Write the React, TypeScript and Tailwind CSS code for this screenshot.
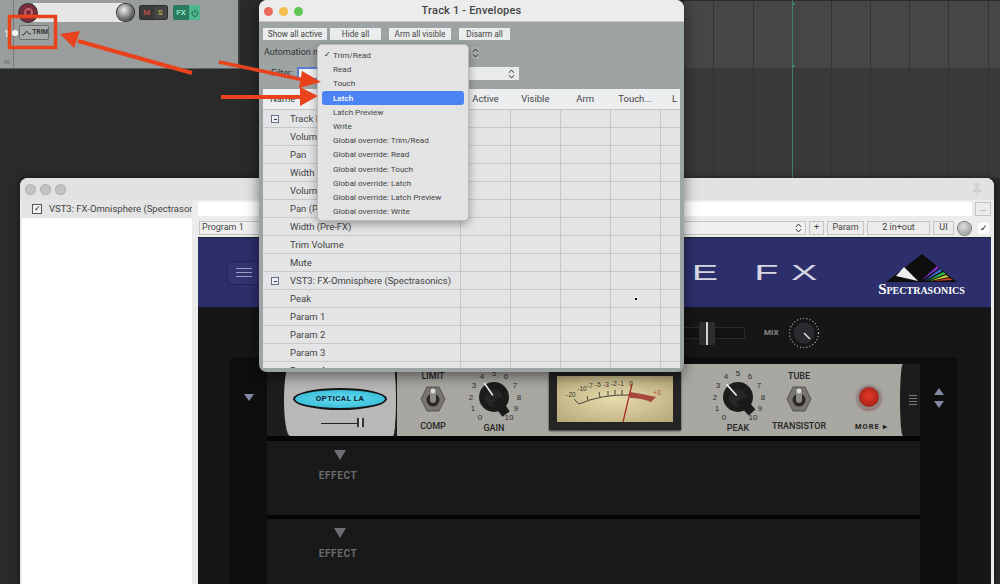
import { Power } from 'lucide-react'

const MENU_ITEMS = [
  'Trim/Read',
  'Read',
  'Touch',
  'Latch',
  'Latch Preview',
  'Write',
  'Global override: Trim/Read',
  'Global override: Read',
  'Global override: Touch',
  'Global override: Latch',
  'Global override: Latch Preview',
  'Global override: Write',
]

const ROWS = [
  { name: 'Track Envelopes', box: true },
  { name: 'Volume' },
  { name: 'Pan' },
  { name: 'Width' },
  { name: 'Volume (Pre-FX)' },
  { name: 'Pan (Pre-FX)' },
  { name: 'Width (Pre-FX)' },
  { name: 'Trim Volume' },
  { name: 'Mute' },
  { name: 'VST3: FX-Omnisphere (Spectrasonics)', box: true },
  { name: 'Peak', dot: true },
  { name: 'Param 1' },
  { name: 'Param 2' },
  { name: 'Param 3' },
  { name: 'Param 4' },
]

function Chevrons({ className = '' }: { className?: string }) {
  return (
    <svg width="7" height="10" viewBox="0 0 7 10" className={className}>
      <path d="M1 3.8 3.5 1 6 3.8M1 6.2 3.5 9 6 6.2" fill="none" stroke="#333" strokeWidth="1" />
    </svg>
  )
}

function TopButton({ label, width }: { label: string; width: number }) {
  return (
    <div
      className="flex h-[12px] items-center justify-center whitespace-nowrap bg-[#ebecec] text-[8.2px] text-[#444]"
      style={{ width }}
    >
      {label}
    </div>
  )
}

function TrackPanel() {
  return (
    <div className="absolute left-0 top-0 flex h-[69px] w-[240px] border-b border-[#5c5f5f] bg-[#999d9d]">
      <div className="flex h-full w-[14px] flex-col items-start border-r border-[#777b7b] pl-[4px] text-[9px] text-white">
        <span className="mt-[28px]">1</span>
        <div className="mt-auto mb-[4px] h-[4px] w-[6px] rounded-[1px] bg-[#858989]" />
      </div>
      <div className="relative flex-1 border-r-2 border-[#3a3a3a]">
        <div className="flex items-center pt-[3px]">
          <div className="relative z-10 -mr-[4px] ml-[5px] flex h-[18px] w-[18px] items-center justify-center rounded-full bg-[#7b2e3a] ring-1 ring-[#333]">
            <div className="h-[9px] w-[9px] rounded-full border-2 border-[#c2646c]" />
          </div>
          <div className="h-[19px] w-[90px] bg-[#e6e7e5]" />
          <div className="-ml-[6px] h-[17px] w-[17px] rounded-full bg-[radial-gradient(circle_at_40%_35%,#eee,#777_55%,#222)] ring-1 ring-[#222]" />
          <div className="ml-[5px] flex h-[15px] w-[29px] overflow-hidden rounded-[2px] border border-[#2d2d2d] text-[8px] font-bold">
            <div className="flex flex-1 items-center justify-center bg-[#3a3a3a] text-[#b2504a]">M</div>
            <div className="flex flex-1 items-center justify-center bg-[#444] text-[#b5a04a]">S</div>
          </div>
          <div className="ml-[5px] flex h-[15px] w-[27px] overflow-hidden rounded-[2px] text-[8px] font-bold">
            <div className="flex flex-1 items-center justify-center bg-[#2c7a5f] text-[#8fe0bb]">FX</div>
            <div className="flex w-[11px] items-center justify-center bg-[#4fb78e] text-[#1f5a45]">
              <Power size={8} strokeWidth={2.5} />
            </div>
          </div>
        </div>
        <div className="absolute -left-[2px] top-[30px] h-[6px] w-[6px] rounded-full bg-white" />
        <div className="absolute left-[5px] top-[25px] flex h-[15px] w-[30px] items-center gap-[1px] rounded-[2px] border border-[#6d7070] bg-[#a9acac] pl-[2px] text-[6.5px] font-bold text-[#333]">
          <svg width="10" height="6" viewBox="0 0 10 6">
            <path d="M0 5H2L5 1 8 4H10" fill="none" stroke="#222" strokeWidth="1" />
          </svg>
          TRIM
        </div>
      </div>
    </div>
  )
}

function ArrangeView() {
  const cells = [30, 40, 39, 39, 39, 39, 39, 40, 39]
  return (
    <div className="absolute left-[684px] top-0 h-[178px] w-[316px] overflow-hidden bg-[#393939]">
      <div className="h-[1px] w-full bg-[#2a2a2a]" />
      <div className="h-[67px] w-full bg-[#464646]" />
      <div className="absolute left-0 top-0 flex h-full">
        {cells.map((w, i) => (
          <div
            key={i}
            className={i === 2 ? 'relative h-full border-r border-[#3f7f72]' : 'h-full border-r border-[#333]'}
            style={{ width: w }}
          >
            {i === 2 && (
              <>
                <div className="absolute -right-[3px] top-[3px] h-[2px] w-[3px] bg-[#3f7f72]" />
                <div className="absolute -right-[3px] top-[65px] h-[2px] w-[3px] bg-[#3f7f72]" />
              </>
            )}
          </div>
        ))}
      </div>
    </div>
  )
}

function DropdownMenu() {
  return (
    <div className="absolute left-[58px] top-[44px] z-10 h-[177px] w-[152px] rounded-[5px] border border-[#bdbdbd] bg-[#e3e3e3] px-[4px] pt-[3px] shadow-[0_3px_10px_rgba(0,0,0,0.35)]">
      {MENU_ITEMS.map((item) => (
        <div
          key={item}
          className={
            item === 'Latch'
              ? 'flex h-[14.2px] items-center rounded-[3px] bg-[#4d84f5] pl-[11px] text-[8.1px] font-medium text-white'
              : 'relative flex h-[14.2px] items-center pl-[11px] text-[8.1px] text-[#444]'
          }
        >
          {item === 'Trim/Read' && <span className="absolute left-[2px] text-[8px] text-[#222]">✓</span>}
          {item}
        </div>
      ))}
    </div>
  )
}

function EnvelopesWindow() {
  return (
    <div className="absolute left-[259px] top-0 z-20 flex h-[372px] w-[425px] flex-col overflow-visible rounded-[8px] bg-[#9ea3a3] shadow-[0_4px_14px_rgba(0,0,0,0.5)]">
      <div className="relative flex h-[22px] shrink-0 items-center justify-center rounded-t-[8px] border-b border-[#c8c8c8] bg-[#ececec] pt-[1px] text-[11px] font-medium tracking-[0.2px] text-[#444]">
        <div className="absolute left-[5px] flex gap-[6px]">
          <div className="h-[9px] w-[9px] rounded-full bg-[#ed6a5e]" />
          <div className="h-[9px] w-[9px] rounded-full bg-[#f5bf4f]" />
          <div className="h-[9px] w-[9px] rounded-full bg-[#61c554]" />
        </div>
        Track 1 - Envelopes
      </div>
      <div className="mt-[6px] flex gap-[3px] pl-[4px]">
        <TopButton label="Show all active" width={64} />
        <TopButton label="Hide all" width={51} />
        <div className="w-[2px]" />
        <TopButton label="Arm all visible" width={62} />
        <div className="w-[2px]" />
        <TopButton label="Disarm all" width={51} />
      </div>
      <div className="mt-[7px] flex h-[12px] items-center pl-[5px] text-[9px] text-[#333]">
        <span>Automation mode:</span>
        <div className="ml-auto mr-[205px] flex h-[12px] w-[8px] items-center justify-center bg-[#a9adad]">
          <Chevrons />
        </div>
      </div>
      <div className="mt-[8px] flex h-[13px] items-center pl-[12px] text-[9px] text-[#333]">
        <span className="w-[26px]">Filter:</span>
        <div className="h-[13px] w-[60px] border-2 border-[#5b7bd6] bg-[#eef0f2]" />
        <div className="flex h-[13px] w-[162px] items-center justify-end bg-[#e9eaea] pr-[4px]">
          <Chevrons />
        </div>
      </div>
      <div className="mx-[4px] mt-[9px] h-[279px] shrink-0 overflow-hidden bg-[#e2e4e6] text-[#444]">
        <div className="flex h-[21px] items-center border-b border-[#c6c8c8] bg-[#edeef0] text-[9.5px]">
          <div className="w-[198px] pl-[7px]">Name</div>
          <div className="w-[50px] text-center">Active</div>
          <div className="w-[50px] text-center">Visible</div>
          <div className="w-[50px] text-center">Arm</div>
          <div className="w-[50px] text-center">Touch...</div>
          <div className="w-[20px] overflow-hidden pl-[12px]">L</div>
        </div>
        {ROWS.map((row) => (
          <div key={row.name} className="flex h-[18px] border-b border-[#c6c8c8] text-[9.5px]">
            <div className="flex w-[198px] items-center border-r border-[#c6c8c8] pt-[1px]">
              <div className="flex w-[27px] shrink-0 justify-start pl-[8px]">
                {row.box && (
                  <div className="flex h-[8px] w-[8px] items-center justify-center border border-[#6a6f85] bg-[#eef]">
                    <div className="h-[1px] w-[3px] bg-[#333]" />
                  </div>
                )}
              </div>
              <span className="whitespace-nowrap">{row.name}</span>
            </div>
            <div className="w-[50px] border-r border-[#c6c8c8]" />
            <div className="w-[50px] border-r border-[#c6c8c8]" />
            <div className="w-[50px] border-r border-[#c6c8c8]" />
            <div className="flex w-[50px] items-center justify-center border-r border-[#c6c8c8]">
              {row.dot && <div className="h-[2px] w-[2px] bg-[#111]" />}
            </div>
          </div>
        ))}
      </div>
      <DropdownMenu />
    </div>
  )
}

function Knob({ angle }: { angle: number }) {
  const labels = [
    ['0', 21, 49],
    ['1', 14, 40],
    ['2', 12, 29],
    ['3', 15, 17],
    ['4', 23, 8],
    ['5', 35, 5],
    ['6', 47, 8],
    ['7', 56, 17],
    ['8', 60, 29],
    ['9', 57, 40],
    ['10', 50, 49],
  ] as const
  return (
    <svg width="70" height="54" viewBox="0 0 70 54" className="block">
      {labels.map(([t, x, y]) => (
        <text
          key={t}
          x={x}
          y={y}
          fontSize="8"
          fill="#2c2c2c"
          textAnchor="middle"
          dominantBaseline="central"
          fontFamily="Liberation Sans"
        >
          {t}
        </text>
      ))}
      <circle cx="35" cy="29" r="15" fill="#1b1b1b" />
      <circle cx="35" cy="30" r="9" fill="#262626" />
      <g transform={`rotate(${angle} 35 29)`}>
        <path d="M30 33 40 33 39.5 50 30.5 50Z" fill="#1a1a1a" />
        <path d="M35 12V27" stroke="#f2f2f2" strokeWidth="1.6" />
      </g>
    </svg>
  )
}

function Toggle() {
  return (
    <svg width="26" height="26" viewBox="0 0 26 26" className="block">
      <path d="M7 1H19L25 13 19 25H7L1 13Z" fill="#77756e" stroke="#55534d" />
      <circle cx="13" cy="14" r="6.5" fill="#2a2826" />
      <rect x="10" y="4" width="6" height="13" rx="3" fill="#8c8a84" />
      <circle cx="13" cy="5" r="2.4" fill="#ddd" />
    </svg>
  )
}

function Meter() {
  const ticks = [
    [31, 24, 30, 20],
    [43, 21, 42, 16],
    [51, 20, 51, 15],
    [58, 19, 58, 14],
    [65, 19, 65, 14],
  ]
  const labels = [
    ['-20', 14, 18],
    ['-10', 25, 12],
    ['-7', 33, 9],
    ['-5', 41, 8],
    ['-3', 49, 8],
    ['-2', 57, 7],
    ['-1', 64, 7],
    ['0', 74, 7],
  ] as const
  return (
    <div className="h-[58px] w-[132px] bg-[#242424] px-[8px] pb-[8px] pt-[4px] shadow-[0_1px_2px_rgba(0,0,0,0.7)]">
      <svg width="116" height="46" viewBox="0 0 116 46" className="block">
        <defs>
          <radialGradient id="meterBg" cx="50%" cy="50%" r="70%">
            <stop offset="0%" stopColor="#e7dcae" />
            <stop offset="100%" stopColor="#b6a878" />
          </radialGradient>
        </defs>
        <rect width="116" height="46" fill="url(#meterBg)" />
        <path d="M17 23 22 28Q45 18 73 19" fill="none" stroke="#4a453a" strokeWidth="1" />
        <path d="M73 16Q86 18 99 21L94 26Q84 22 73 22Z" fill="#a8473c" />
        {ticks.map(([a, b, c, d], i) => (
          <path key={i} d={`M${a} ${b}L${c} ${d}`} stroke="#4a453a" strokeWidth="1" />
        ))}
        {labels.map(([t, x, y]) => (
          <text
            key={t}
            x={x}
            y={y}
            fontSize="6.5"
            fill="#3a362c"
            textAnchor="middle"
            dominantBaseline="central"
            fontFamily="Liberation Sans"
          >
            {t}
          </text>
        ))}
        <text x="100" y="16" fontSize="6.5" fill="#b5483a" textAnchor="middle" dominantBaseline="central" fontFamily="Liberation Sans">
          +3
        </text>
        <path d="M75 8 66 46" stroke="#a82c22" strokeWidth="1.3" />
      </svg>
    </div>
  )
}

function StripLabel({ text }: { text: string }) {
  return <div className="whitespace-nowrap text-[9px] font-medium leading-[9px] text-[#262626]">{text}</div>
}

function EffectSlot({ className }: { className: string }) {
  return (
    <div className={`bg-[#191919] ${className}`}>
      <div className="ml-[50px] flex w-[42px] flex-col items-center pt-[9px]">
        <svg width="12" height="10" viewBox="0 0 12 10" className="ml-[4px] block">
          <path d="M0 0H12L6 10Z" fill="#6d6d73" />
        </svg>
        <span className="mt-[11px] text-[10px] font-bold leading-[10px] tracking-[0.6px] text-[#6a6a6e]">EFFECT</span>
      </div>
    </div>
  )
}

function OpticalStrip() {
  return (
    <div className="flex h-[72px] shrink-0 bg-[#a8a7a1]">
      <div className="w-[17px] bg-[#1d1d1d]" />
      <div className="relative h-full w-[113px] bg-[#1d1d1d]">
        <div className="absolute inset-y-0 left-0 w-[113px] rounded-l-[12px_72px] rounded-r-[8px_72px] border-r border-[#111] bg-[#b9b8b6]" />
        <div className="absolute left-[9px] top-[24px] flex h-[22px] w-[94px] items-center justify-center rounded-[50%] border-2 border-[#151515] bg-[radial-gradient(ellipse_at_center,#62dcef,#2fb4d2)] text-[8px] font-bold tracking-[0.4px] text-[#123]">
          OPTICAL LA
        </div>
        <div className="absolute left-[37px] top-[59px] h-[1px] w-[36px] bg-[#222]" />
        <div className="absolute left-[73px] top-[54px] h-[9px] w-[7px] border-x-2 border-[#333] bg-[#ccc]" />
      </div>
      <div className="ml-[11px] flex h-full w-[50px] flex-col items-center pt-[8px]">
        <StripLabel text="LIMIT" />
        <div className="mt-[5px]">
          <Toggle />
        </div>
        <div className="mt-[10px]">
          <StripLabel text="COMP" />
        </div>
      </div>
      <div className="ml-[1px] flex w-[70px] flex-col items-center pt-[4px]">
        <Knob angle={-35} />
        <div className="mt-[2px]">
          <StripLabel text="GAIN" />
        </div>
      </div>
      <div className="ml-[20px] mt-[8px]">
        <Meter />
      </div>
      <div className="ml-[22px] flex w-[70px] flex-col items-center pt-[4px]">
        <Knob angle={-42} />
        <div className="mt-[2px]">
          <StripLabel text="PEAK" />
        </div>
      </div>
      <div className="ml-[1px] flex h-full w-[50px] flex-col items-center pt-[8px]">
        <StripLabel text="TUBE" />
        <div className="mt-[5px]">
          <Toggle />
        </div>
        <div className="mt-[10px]">
          <StripLabel text="TRANSISTOR" />
        </div>
      </div>
      <div className="ml-[33px] flex w-[36px] flex-col pt-[21px]">
        <div className="h-[24px] w-[24px] rounded-full border-2 border-[#8a8a88] bg-[radial-gradient(circle_at_50%_45%,#e5392a,#8f1a12)] shadow-[0_1px_3px_rgba(120,0,0,0.6)]" />
        <span className="-ml-[2px] mt-[14px] whitespace-nowrap text-[7.5px] font-bold leading-[8px] tracking-[1px] text-[#222]">
          MORE ▸
        </span>
      </div>
      <div className="ml-auto flex h-full w-[20px] items-center justify-end rounded-l-[6px_72px] bg-[#1c1c1c] pr-[3px]">
        <div className="flex w-[8px] flex-col gap-[2px]">
          <div className="h-[1px] bg-[#777]" />
          <div className="h-[1px] bg-[#777]" />
          <div className="h-[1px] bg-[#777]" />
          <div className="h-[1px] bg-[#777]" />
        </div>
      </div>
    </div>
  )
}

function PluginView() {
  return (
    <div className="flex min-h-0 flex-1 flex-col overflow-hidden border-t border-[#222] bg-[#161616]">
      <div className="flex h-[70px] shrink-0 items-center border-b border-[#15152b] bg-[#2c2f6b]">
        <div className="ml-[29px] flex h-[24px] w-[70px] items-center rounded-[4px] border border-[#23255a] bg-[#31346f] pl-[8px]">
          <div className="flex w-[16px] flex-col gap-[3px]">
            <div className="h-[1px] bg-[#9a9dc4]" />
            <div className="h-[1px] bg-[#9a9dc4]" />
            <div className="h-[1px] bg-[#9a9dc4]" />
          </div>
        </div>
        <div className="ml-auto mr-[49px] origin-right scale-x-[1.8] whitespace-nowrap font-['Liberation_Sans',sans-serif] text-[22px] leading-none tracking-[7px] text-[#d6d7e2]">
          OMNISPHERE FX
        </div>
        <div className="mr-[27px] flex w-[85px] flex-col items-center pt-[5px]">
          <svg width="72" height="30" viewBox="0 0 72 30" className="block">
            <path d="M36 0 71 28H0Z" fill="#0e0e0e" />
            <path d="M18 13 32 27 10 22Z" fill="#efefef" />
            <path d="M35 27 51 12 53 14Z" fill="#8a2bd0" />
            <path d="M38 27 54 15 56 17Z" fill="#3a6fd8" />
            <path d="M41 27 57 18 60 20Z" fill="#2fb34a" />
            <path d="M44 27 60 21 63 23Z" fill="#c8c82a" />
            <path d="M47 27 63 24 67 26Z" fill="#d0421f" />
          </svg>
          <div className="-mt-[2px] whitespace-nowrap font-['Liberation_Serif',serif] text-[10px] font-bold leading-none text-white">
            <span className="text-[15px]">S</span>PECTRASONICS
          </div>
        </div>
      </div>
      <div className="flex h-[49px] shrink-0 items-center pl-[482px]">
        <div className="relative h-[12px] w-[65px] border border-[#2a2a2a] bg-[#121212]">
          <div className="absolute -top-[6px] left-[18px] flex h-[23px] w-[16px] justify-center rounded-[2px] bg-[#2d2d2d]">
            <div className="h-full w-[2px] bg-[#cfcfcf]" />
          </div>
        </div>
        <span className="ml-[19px] text-[8px] font-bold text-[#8b8b8b]">MIX</span>
        <svg width="32" height="32" viewBox="0 0 32 32" className="ml-[9px]">
          <circle cx="16" cy="16" r="14.5" fill="none" stroke="#bbb" strokeWidth="1.2" strokeDasharray="1 2.2" />
          <circle cx="16" cy="16" r="10.5" fill="#2a2b2f" />
          <path d="M16 16 22 22" stroke="#ddd" strokeWidth="1.5" />
        </svg>
      </div>
      <div className="ml-[32px] mr-[33px] flex min-h-0 flex-1 rounded-t-[4px] bg-[#0e0e0f] pt-[7px]">
        <div className="flex w-[37px] shrink-0 justify-center pt-[30px]">
          <svg width="10" height="7" viewBox="0 0 10 7">
            <path d="M0 0H10L5 7Z" fill="#8288a6" />
          </svg>
        </div>
        <div className="flex w-[653px] shrink-0 flex-col gap-[4px] bg-[#050505]">
          <OpticalStrip />
          <EffectSlot className="mt-[1px] h-[74px] shrink-0" />
          <EffectSlot className="flex-1" />
        </div>
        <div className="flex flex-1 flex-col items-center gap-[6px] pt-[24px]">
          <svg width="10" height="7" viewBox="0 0 10 7">
            <path d="M0 7H10L5 0Z" fill="#8288a6" />
          </svg>
          <svg width="10" height="7" viewBox="0 0 10 7">
            <path d="M0 0H10L5 7Z" fill="#8288a6" />
          </svg>
        </div>
      </div>
    </div>
  )
}

function FxButton({ label, width }: { label: string; width: number }) {
  return (
    <div
      className="flex h-[14px] shrink-0 items-center justify-center border border-[#c4c4c4] bg-[#ececec] text-[9px] text-[#444]"
      style={{ width }}
    >
      {label}
    </div>
  )
}

function FxWindow() {
  return (
    <div className="absolute left-[20px] top-[178px] z-10 flex h-[406px] w-[974px] flex-col rounded-t-[8px] bg-[#ececec] shadow-[0_0_6px_rgba(0,0,0,0.6)]">
      <div className="flex h-[22px] shrink-0 items-center justify-between rounded-t-[8px] bg-[#e2e2e2] pl-[6px] pr-[11px]">
        <div className="flex gap-[6px]">
          <div className="h-[9px] w-[9px] rounded-full bg-[#c3c3c3] ring-1 ring-[#b0b0b0]" />
          <div className="h-[9px] w-[9px] rounded-full bg-[#c3c3c3] ring-1 ring-[#b0b0b0]" />
          <div className="h-[9px] w-[9px] rounded-full bg-[#c3c3c3] ring-1 ring-[#b0b0b0]" />
        </div>
        <svg width="12" height="13" viewBox="0 0 12 13">
          <path d="M3 0H9V2H8V6L11 8V9H7L6 13 5 9H1V8L4 6V2H3Z" fill="#d2d2d2" />
        </svg>
      </div>
      <div className="flex min-h-0 flex-1">
        <div className="ml-[2px] w-[170px] shrink-0 bg-white">
          <div className="flex h-[18px] items-center overflow-hidden whitespace-nowrap bg-[#e4e4e4] pl-[10px] text-[9.5px] text-[#444]">
            <div className="mr-[7px] flex h-[10px] w-[10px] shrink-0 items-center justify-center border border-[#555] bg-[#f4f4f4] text-[8px] leading-none text-black">
              ✓
            </div>
            VST3: FX-Omnisphere (Spectrasonics)
          </div>
        </div>
        <div className="ml-[6px] flex min-w-0 flex-1 flex-col pr-[3px]">
          <div className="flex h-[17px] shrink-0 items-center pt-[1px]">
            <div className="h-[14px] flex-1 bg-white" />
            <div className="ml-[3px] flex h-[14px] w-[16px] items-center justify-center border border-[#c4c4c4] text-[8px] leading-none text-[#555]">
              ...
            </div>
          </div>
          <div className="mt-[4px] flex h-[14px] shrink-0 items-center gap-[3px]">
            <div className="ml-[1px] flex h-[14px] w-[607px] items-center justify-between border border-[#c4c4c4] bg-[#f0f0f0] pl-[2px] pr-[3px] text-[9px] text-[#444]">
              Program 1
              <Chevrons />
            </div>
            <FxButton label="+" width={15} />
            <FxButton label="Param" width={37} />
            <FxButton label="2 in+out" width={63} />
            <FxButton label="UI" width={21} />
            <div className="ml-[1px] h-[13px] w-[13px] rounded-full bg-[radial-gradient(circle_at_40%_35%,#ddd,#89908f)] ring-1 ring-[#777]" />
            <div className="ml-[4px] flex h-[11px] w-[11px] items-center justify-center rounded-[2px] bg-white text-[9px] leading-none text-black">
              ✓
            </div>
          </div>
          <div className="mt-[2px] flex min-h-0 flex-1 flex-col">
            <PluginView />
          </div>
        </div>
      </div>
    </div>
  )
}

function Annotations() {
  return (
    <svg width="1000" height="584" viewBox="0 0 1000 584" className="pointer-events-none absolute left-0 top-0 z-30">
      <rect x="9.5" y="16.5" width="46" height="31" fill="none" stroke="#e9431d" strokeWidth="3.5" />
      <path d="M192 73 78 41" stroke="#e9431d" strokeWidth="4" />
      <path d="M60 34 80 31 74 48Z" fill="#e9431d" />
      <path d="M219 62 304 80" stroke="#e9431d" strokeWidth="3.5" />
      <path d="M321 82 302 71 299 88Z" fill="#e9431d" />
      <path d="M221 97 302 97" stroke="#e9431d" strokeWidth="4" />
      <path d="M318 96 300 87 300 106Z" fill="#e9431d" />
    </svg>
  )
}

export default function App() {
  return (
    <div className="relative h-[584px] w-[1000px] overflow-hidden bg-[#2a2a2a] font-['Roboto',sans-serif]">
      <TrackPanel />
      <ArrangeView />
      <FxWindow />
      <EnvelopesWindow />
      <Annotations />
    </div>
  )
}
